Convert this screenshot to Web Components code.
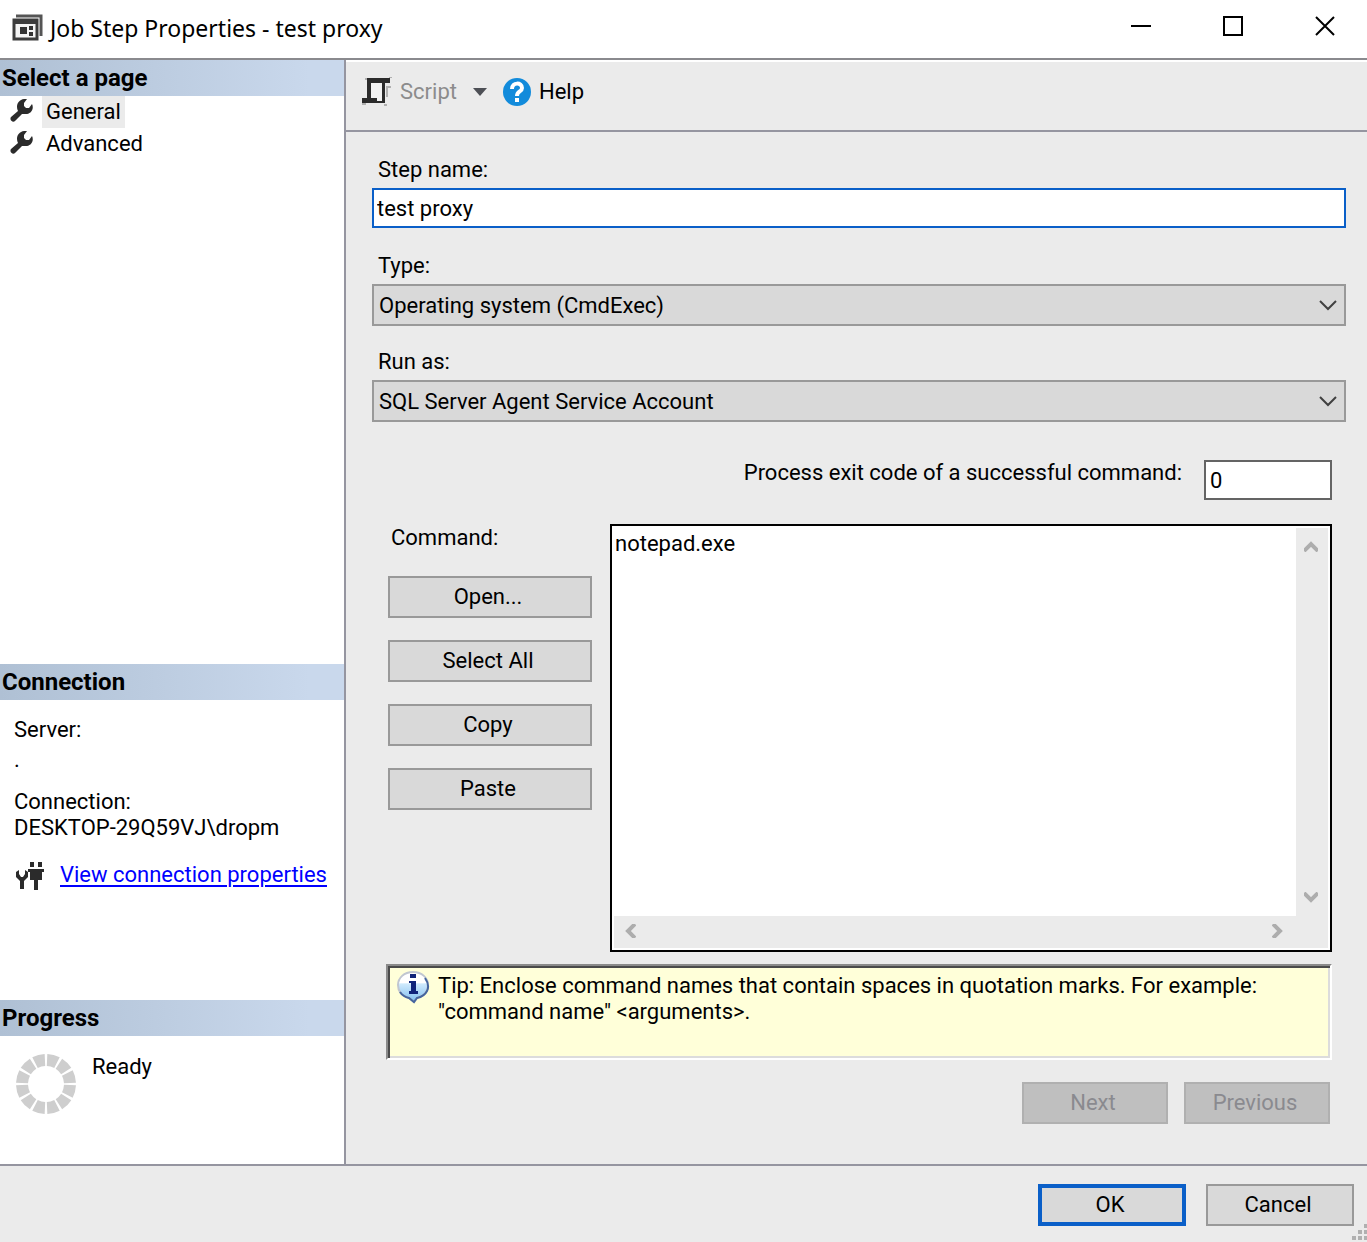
<!DOCTYPE html>
<html lang="en">
<head>
<meta charset="utf-8">
<title>Job Step Properties - test proxy</title>
<style>
  html, body {
    margin: 0;
    height: 100%;
  }
  body {
    font-family: Roboto, "Liberation Sans", sans-serif;
    font-size: 22px;
    line-height: 26px;
    color: #000;
    background: #ebebeb;
  }
</style>
</head>
<body>
<job-step-dialog></job-step-dialog>

<script>
const wrenchIcon = `
  <svg width="24" height="24" viewBox="0 0 24 24" aria-hidden="true">
    <path fill="#2b2b2b" d="M17 0 14 4V7L16 9H19L22 5C24 9 22 14 17 15H12L5 22C3 24 -1 21 1 18L8 12C5 6 9 -1 17 0Z"/>
  </svg>
`;

class TitleBar extends HTMLElement {
  connectedCallback() {
    const titleBarTemplate = `
      <style>
        :host {
          display: flex;
          align-items: center;
          height: 56px;
          padding: 0 0 2px 12px;
          overflow: hidden;
          background: #fff;
          border-bottom: 2px solid #8a8a8e;
          font-family: "Noto Sans", "Open Sans", sans-serif;
        }
        h1 {
          flex: 1;
          margin: 0 0 0 6px;
          font-size: 23px;
          font-weight: 400;
        }
        button {
          width: 92px;
          height: 52px;
          padding: 0 0 4px;
          border: 0;
          background: none;
        }
        button svg {
          display: block;
          margin: 0 auto;
        }
        button:last-child {
          margin-right: -4px;
        }
      </style>
      <svg width="32" height="28" viewBox="0 0 32 28" aria-hidden="true">
        <path d="M4 2H29V22" fill="none" stroke="#555" stroke-width="3"/>
        <rect x="2" y="6" width="23" height="19" fill="#f4f4f4" stroke="#3c3c3c" stroke-width="3"/>
        <path d="M1 5H26V10H1Z" fill="#3c3c3c"/>
        <path d="M8 13H15V20H8ZM17 12H21V16H17ZM17 18H21V22H17Z" fill="#333"/>
      </svg>
      <h1><slot></slot></h1>
      <button type="button" aria-label="Minimize">
        <svg width="20" height="20"><path d="M0 10H20" stroke="#000" stroke-width="2"/></svg>
      </button>
      <button type="button" aria-label="Maximize">
        <svg width="20" height="20"><rect x="1" y="1" width="18" height="18" fill="none" stroke="#000" stroke-width="2"/></svg>
      </button>
      <button type="button" aria-label="Close">
        <svg width="20" height="20"><path d="M1 1 19 19M19 1 1 19" stroke="#000" stroke-width="2"/></svg>
      </button>
    `;
    this.attachShadow({ mode: 'open' });
    this.shadowRoot.innerHTML = titleBarTemplate;
  }
}

class SideSection extends HTMLElement {
  connectedCallback() {
    this.attachShadow({ mode: 'open' });
    this.shadowRoot.innerHTML = `
      <style>
        :host {
          display: block;
        }
        h2 {
          margin: 0;
          padding: 0 2px;
          font-size: 24px;
          line-height: 36px;
          font-weight: 700;
          background: linear-gradient(to right, #afc0d4, #c9d8ec 90%);
        }
      </style>
      <h2>${this.getAttribute('heading')}</h2>
      <slot></slot>
    `;
  }
}

class PageLink extends HTMLElement {
  connectedCallback() {
    this.attachShadow({ mode: 'open' });
    this.shadowRoot.innerHTML = `
      <style>
        :host {
          display: block;
        }
        a {
          display: flex;
          align-items: center;
          gap: 8px;
          padding-left: 10px;
          color: inherit;
          text-decoration: none;
          line-height: 32px;
        }
        svg {
          margin-bottom: 2px;
        }
        span {
          padding: 0 4px;
        }
        :host([selected]) span {
          background: #ebebeb;
        }
      </style>
      <a href="#">${wrenchIcon}<span><slot></slot></span></a>
    `;
  }
}

class ToolBar extends HTMLElement {
  connectedCallback() {
    const toolBarTemplate = `
      <style>
        :host {
          display: flex;
          align-items: center;
          height: 60px;
          padding: 0 16px 8px;
          border-top: 2px solid #fff;
          border-bottom: 2px solid #9595a0;
        }
        button {
          display: flex;
          align-items: center;
          gap: 8px;
          padding: 0;
          border: 0;
          background: none;
          font: inherit;
          color: #000;
        }
        button:disabled {
          color: #8c8c8c;
        }
        .arrow {
          margin: 0 16px;
        }
      </style>
      <button type="button" disabled>
        <svg width="30" height="30" viewBox="0 0 30 30" aria-hidden="true">
          <path d="M9 6H20V24H15V21H9Z" fill="#f2f2f2"/>
          <path d="M3 2H6M27 0H30M0 27H4M22 28H25M25 10V20M24 10H29" fill="none" stroke="#b0b0b0" stroke-width="2"/>
          <path d="M5 1H28V6H23V26H0V21H5ZM9 6V21H15V24H20V6Z" fill="#2b2b2b" fill-rule="evenodd"/>
        </svg>
        Script
      </button>
      <button type="button" class="arrow" aria-label="Script options">
        <svg width="14" height="8"><path d="M0 0H14L7 8Z" fill="#4d4f55"/></svg>
      </button>
      <button type="button">
        <svg width="28" height="28" viewBox="0 0 28 28" aria-hidden="true">
          <circle cx="14" cy="14" r="14" fill="#128bdb"/>
          <path d="M9 11C9 4 19 4 19 10C19 14 14 13 14 18M14 20V24" fill="none" stroke="#fff" stroke-width="4"/>
        </svg>
        Help
      </button>
    `;
    this.attachShadow({ mode: 'open' });
    this.shadowRoot.innerHTML = toolBarTemplate;
  }
}

class TextField extends HTMLElement {
  connectedCallback() {
    this.attachShadow({ mode: 'open' });
    this.shadowRoot.innerHTML = `
      <style>
        :host {
          display: block;
          padding-bottom: 2px;
        }
        label {
          display: block;
          padding: 0 6px 5px;
        }
        input {
          box-sizing: border-box;
          width: 100%;
          height: 40px;
          padding: 0 3px;
          border: 2px solid #0a5fc8;
          border-radius: 0;
          background: #fff;
          font: inherit;
          color: #000;
          outline: none;
        }
        :host([inline]) {
          display: flex;
          justify-content: flex-end;
          gap: 16px;
        }
        :host([inline]) input {
          width: 128px;
          padding: 0 4px;
          border-color: #646464;
        }
      </style>
      <label for="field">${this.getAttribute('label')}</label>
      <input id="field" type="text" value="${this.getAttribute('value')}">
    `;
  }
}

class SelectField extends HTMLElement {
  connectedCallback() {
    this.attachShadow({ mode: 'open' });
    this.shadowRoot.innerHTML = `
      <style>
        :host {
          display: block;
        }
        label {
          display: block;
          padding: 0 6px 5px;
        }
        .box {
          display: grid;
          align-items: center;
        }
        select, svg {
          grid-area: 1 / 1;
        }
        select {
          appearance: none;
          width: 100%;
          height: 42px;
          padding: 2px 40px 0 5px;
          border: 2px solid #999;
          border-radius: 0;
          background: #d9d9d9;
          font: inherit;
          color: #000;
        }
        svg {
          justify-self: end;
          margin-right: 9px;
          pointer-events: none;
        }
      </style>
      <label for="field">${this.getAttribute('label')}</label>
      <div class="box">
        <select id="field"><option>${this.getAttribute('value')}</option></select>
        <svg width="18" height="12"><path d="M1 2 9 10 17 2" fill="none" stroke="#404040" stroke-width="2"/></svg>
      </div>
    `;
  }
}

class PushButton extends HTMLElement {
  connectedCallback() {
    this.attachShadow({ mode: 'open' });
    this.shadowRoot.innerHTML = `
      <style>
        :host {
          display: block;
        }
        button {
          width: 100%;
          height: 42px;
          padding: 0 4px 0 0;
          border: 2px solid #999;
          background: #d9d9d9;
          font: inherit;
          color: #000;
        }
        :host([default]) button {
          border: 4px solid #0a5fc8;
        }
        button:disabled {
          border-color: #b0b0b0;
          background: #bfbfbf;
          color: #8a8a8f;
        }
      </style>
      <button type="button" ${this.hasAttribute('disabled') ? 'disabled' : ''}><slot></slot></button>
    `;
  }
}

class CommandBox extends HTMLElement {
  connectedCallback() {
    this.attachShadow({ mode: 'open' });
    this.shadowRoot.innerHTML = `
      <style>
        :host {
          display: grid;
          grid-template: 1fr 32px / 1fr 32px;
          box-sizing: border-box;
          padding: 2px;
          border: 2px solid #000;
          background: #fff;
        }
        textarea {
          display: block;
          padding: 3px 1px;
          border: 0;
          outline: none;
          resize: none;
          overflow: hidden;
          background: #fff;
          font: inherit;
          color: #000;
        }
        .bar {
          display: flex;
          justify-content: space-between;
          align-items: center;
          background: #ebebeb;
        }
        .vertical {
          flex-direction: column;
          padding: 12px 2px 12px 0;
        }
        .horizontal {
          grid-column: 1 / 3;
          padding: 0 44px 2px 10px;
        }
        path {
          fill: none;
          stroke: #adadad;
          stroke-width: 4;
        }
      </style>
      <textarea aria-label="Command" wrap="off" spellcheck="false">${this.getAttribute('value')}</textarea>
      <div class="bar vertical">
        <svg width="14" height="12"><path d="M0 11 7 4 14 11"/></svg>
        <svg width="14" height="12"><path d="M0 1 7 8 14 1"/></svg>
      </div>
      <div class="bar horizontal">
        <svg width="12" height="14"><path d="M11 0 4 7 11 14"/></svg>
        <svg width="12" height="14"><path d="M1 0 8 7 1 14"/></svg>
      </div>
    `;
  }
}

class TipBox extends HTMLElement {
  connectedCallback() {
    const tipBoxTemplate = `
      <style>
        :host {
          display: flex;
          align-items: flex-start;
          gap: 8px;
          box-sizing: border-box;
          min-height: 96px;
          padding: 4px 8px;
          border: 2px solid;
          border-color: #8a8a8a #fff #fff #8a8a8a;
          background: #ffffd9;
          box-shadow: inset 2px 2px #4a4a4a, inset -2px -2px #dcdcdc;
        }
        p {
          margin: 3px 0 0;
        }
      </style>
      <svg width="34" height="34" viewBox="0 0 34 34" aria-hidden="true">
        <defs>
          <linearGradient id="bubble" x1="0" y1="0" x2="0" y2="1">
            <stop offset=".35" stop-color="#fff"/>
            <stop offset=".4" stop-color="#cfeafc"/>
            <stop offset="1" stop-color="#7dbcf0"/>
          </linearGradient>
        </defs>
        <path d="M17 2C8 2 2 8 2 15C2 22 6 26 13 28L18 32 21 28C28 26 32 22 32 15C32 8 26 2 17 2Z" fill="url(#bubble)" stroke="#c0c6d0" stroke-width="2"/>
        <path d="M29 8C36 18 30 26 21 28L18 32 13 28C9 27 6 25 4 22" fill="none" stroke="#45659e" stroke-width="2"/>
        <path d="M14 4H20V8H14ZM13 11H20V21H22V24H13V21H15V13H13Z" fill="#10237a"/>
      </svg>
      <p><slot></slot></p>
    `;
    this.attachShadow({ mode: 'open' });
    this.shadowRoot.innerHTML = tipBoxTemplate;
  }
}

class ProgressRing extends HTMLElement {
  connectedCallback() {
    const progressRingTemplate = `
      <style>
        :host {
          display: block;
          width: 60px;
          height: 60px;
        }
        circle {
          fill: none;
          stroke: #cecece;
          stroke-width: 12;
          stroke-dasharray: 82 18;
          stroke-dashoffset: -9;
        }
      </style>
      <svg width="60" height="60" aria-hidden="true">
        <circle cx="30" cy="30" r="24" pathLength="1200"/>
      </svg>
    `;
    this.attachShadow({ mode: 'open' });
    this.shadowRoot.innerHTML = progressRingTemplate;
  }
}

class JobStepDialog extends HTMLElement {
  connectedCallback() {
    const jobStepDialogTemplate = `
      <style>
        :host {
          display: grid;
          grid-template: auto 1fr auto / 344px 1fr;
          min-height: 100vh;
          background: #ebebeb;
        }
        title-bar, footer {
          grid-column: 1 / 3;
        }
        aside {
          display: flex;
          flex-direction: column;
          background: #fff;
        }
        .pages {
          flex: 1;
        }
        .connection {
          min-height: 336px;
        }
        .progress {
          min-height: 164px;
        }
        dl {
          margin: 0;
          padding: 17px 14px 19px;
        }
        dd {
          margin: 0;
        }
        dd:first-of-type {
          padding: 4px 0 16px;
        }
        .view {
          display: flex;
          align-items: center;
          gap: 16px;
          padding-left: 14px;
        }
        .view a {
          color: #00f;
          text-underline-offset: 3px;
        }
        .status {
          display: flex;
          gap: 16px;
          padding: 18px 16px;
        }
        main {
          border-left: 2px solid #9595a0;
        }
        form {
          padding: 25px 21px 40px 26px;
        }
        .fields {
          display: grid;
          gap: 23px;
        }
        .details {
          padding: 38px 14px 0;
        }
        .command {
          display: grid;
          grid-template-columns: 204px 1fr;
          gap: 18px;
          margin: 22px 0 12px 2px;
        }
        .buttons {
          display: grid;
          align-content: start;
          gap: 22px;
        }
        .buttons span {
          padding: 1px 3px 3px;
        }
        command-box {
          height: 428px;
        }
        .steps {
          display: grid;
          grid-template-columns: 146px 146px;
          justify-content: end;
          gap: 16px;
          padding: 22px 2px 0;
        }
        footer {
          display: flex;
          justify-content: flex-end;
          padding: 18px 0 16px;
          border-top: 2px solid #9595a0;
        }
        footer push-button {
          width: 148px;
          margin-left: 20px;
        }
        .grip {
          align-self: flex-end;
          margin: 0 0 -14px -2px;
        }
      </style>
      <title-bar>Job Step Properties - test proxy</title-bar>
      <aside>
        <side-section class="pages" heading="Select a page">
          <page-link selected>General</page-link>
          <page-link>Advanced</page-link>
        </side-section>
        <side-section class="connection" heading="Connection">
          <dl>
            <dt>Server:</dt>
            <dd>.</dd>
            <dt>Connection:</dt>
            <dd>DESKTOP-29Q59VJ\\dropm</dd>
          </dl>
          <div class="view">
            <svg width="30" height="30" viewBox="0 0 30 30" aria-hidden="true">
              <path d="M16 2H20V7H16ZM24 2H28V7H24ZM14 9H30V12H28V20H24V30H20V20H16V12H14Z" fill="#2b2b2b"/>
              <path d="M5 10 2 12V17L6 21V29H10V21L14 17V12L11 10V14L9 17H7L5 14Z" fill="#2b2b2b"/>
            </svg>
            <a href="#">View connection properties</a>
          </div>
        </side-section>
        <side-section class="progress" heading="Progress">
          <div class="status">
            <progress-ring></progress-ring>
            <span>Ready</span>
          </div>
        </side-section>
      </aside>
      <main>
        <tool-bar></tool-bar>
        <form>
          <div class="fields">
            <text-field label="Step name:" value="test proxy"></text-field>
            <select-field label="Type:" value="Operating system (CmdExec)"></select-field>
            <select-field label="Run as:" value="SQL Server Agent Service Account"></select-field>
          </div>
          <div class="details">
            <text-field inline label="Process exit code of a successful command:" value="0"></text-field>
            <div class="command">
              <div class="buttons">
                <span>Command:</span>
                <push-button>Open...</push-button>
                <push-button>Select All</push-button>
                <push-button>Copy</push-button>
                <push-button>Paste</push-button>
              </div>
              <command-box value="notepad.exe"></command-box>
            </div>
            <tip-box>Tip: Enclose command names that contain spaces in quotation marks. For example:<br>"command name" &lt;arguments&gt;.</tip-box>
            <div class="steps">
              <push-button disabled>Next</push-button>
              <push-button disabled>Previous</push-button>
            </div>
          </div>
        </form>
      </main>
      <footer>
        <push-button default>OK</push-button>
        <push-button>Cancel</push-button>
        <svg class="grip" width="15" height="16" fill="#b0b0b0" aria-hidden="true">
          <path d="M12 0h4v4h-4ZM6 6h4v4h-4ZM12 6h4v4h-4ZM0 12h4v4h-4ZM6 12h4v4h-4ZM12 12h4v4h-4Z"/>
        </svg>
      </footer>
    `;
    this.attachShadow({ mode: 'open' });
    this.shadowRoot.innerHTML = jobStepDialogTemplate;
  }
}

window.customElements.define('title-bar', TitleBar);
window.customElements.define('side-section', SideSection);
window.customElements.define('page-link', PageLink);
window.customElements.define('tool-bar', ToolBar);
window.customElements.define('text-field', TextField);
window.customElements.define('select-field', SelectField);
window.customElements.define('push-button', PushButton);
window.customElements.define('command-box', CommandBox);
window.customElements.define('tip-box', TipBox);
window.customElements.define('progress-ring', ProgressRing);
window.customElements.define('job-step-dialog', JobStepDialog);
</script>
</body>
</html>
